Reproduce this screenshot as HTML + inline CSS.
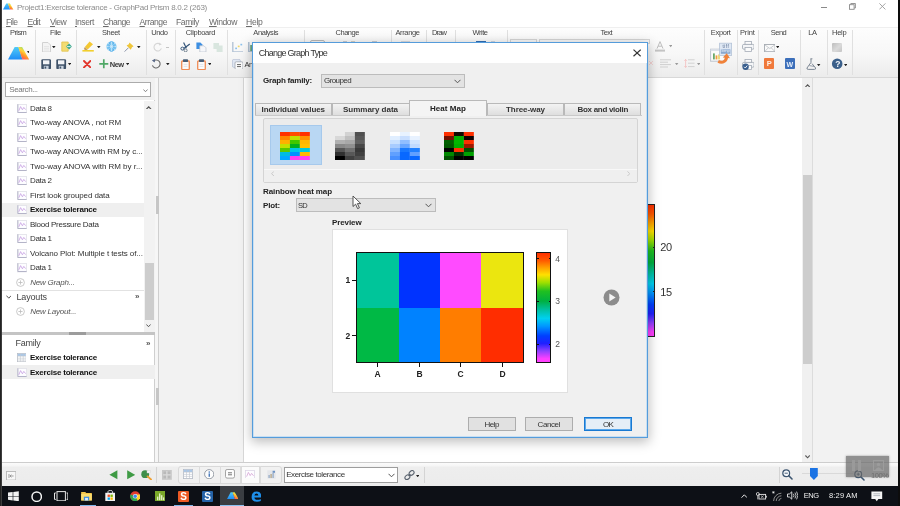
<!DOCTYPE html>
<html><head><meta charset="utf-8"><title>GraphPad Prism - Change Graph Type</title>
<style>
*{box-sizing:border-box;margin:0;padding:0}
html,body{width:900px;height:506px;overflow:hidden;background:#fff}
body{position:relative;font-family:"Liberation Sans",sans-serif;font-size:8px;color:#333}
.a{position:absolute}
.t{position:absolute;white-space:nowrap;line-height:1}
u{text-decoration-thickness:.5px;text-underline-offset:1px}
#w{position:absolute;left:0;top:0;width:900px;height:506px;filter:blur(.4px)}
</style></head><body>
<div id="w">
<div class="a" style="left:-8px;top:-8px;width:916px;height:23px;background:#fff"></div>
<div class="a" style="left:-8px;top:15px;width:916px;height:12px;background:#fff"></div>
<div class="a" style="left:-8px;top:27px;width:916px;height:51px;background:linear-gradient(#fdfdfd 0%,#f7f7f7 55%,#ececec 100%);border-bottom:1px solid #d8d8d8;border-top:1px solid #efefef"></div>
<div class="a" style="left:-8px;top:78px;width:916px;height:384.2px;background:#f2f2f2"></div>
<div class="a" style="left:2px;top:78px;width:153px;height:384.2px;background:#fff"></div>
<div class="a" style="left:154.4px;top:78px;width:4.6px;height:384.2px;background:#f6f6f6;border-left:1px solid #cfcfcf;border-right:1px solid #cfcfcf"></div>
<div class="a" style="left:243px;top:78px;width:559px;height:384.2px;background:#fff;border-left:1px solid #d6d6d6"></div>
<div class="a" style="left:802px;top:78px;width:11px;height:384.2px;background:#f0f0f0;border-right:1px solid #dcdcdc"></div>
<div class="a" style="left:803px;top:175px;width:9px;height:189px;background:#cdcdcd"></div>
<div class="a" style="left:-8px;top:462.2px;width:916px;height:24px;background:linear-gradient(#fbfbfb 0,#f6f6f6 3px,#eeeeee 4px,#ececec 100%);border-top:1px solid #cdcdcd"></div>
<div class="a" style="left:-8px;top:486px;width:916px;height:28px;background:#0d1016"></div>
<div class="t" style="left:17.0px;top:3.6px;font-size:8px;font-weight:400;color:#8c8c8c;letter-spacing:-0.260px;">Project1:Exercise tolerance - GraphPad Prism 8.0.2 (263)</div>
<div class="t" style="left:6.0px;top:18.3px;font-size:8.6px;font-weight:400;color:#6a6a6a;letter-spacing:-0.590px;"><u>F</u>ile</div>
<div class="t" style="left:27.5px;top:18.3px;font-size:8.6px;font-weight:400;color:#6a6a6a;letter-spacing:-0.578px;"><u>E</u>dit</div>
<div class="t" style="left:50.0px;top:18.3px;font-size:8.6px;font-weight:400;color:#6a6a6a;letter-spacing:-0.621px;"><u>V</u>iew</div>
<div class="t" style="left:75.0px;top:18.3px;font-size:8.6px;font-weight:400;color:#6a6a6a;letter-spacing:-0.417px;"><u>I</u>nsert</div>
<div class="t" style="left:103.0px;top:18.3px;font-size:8.6px;font-weight:400;color:#6a6a6a;letter-spacing:-0.521px;"><u>C</u>hange</div>
<div class="t" style="left:139.5px;top:18.3px;font-size:8.6px;font-weight:400;color:#6a6a6a;letter-spacing:-0.440px;"><u>A</u>rrange</div>
<div class="t" style="left:176.0px;top:18.3px;font-size:8.6px;font-weight:400;color:#6a6a6a;letter-spacing:-0.388px;">Fa<u>m</u>ily</div>
<div class="t" style="left:209.0px;top:18.3px;font-size:8.6px;font-weight:400;color:#6a6a6a;letter-spacing:-0.432px;"><u>W</u>indow</div>
<div class="t" style="left:246.0px;top:18.3px;font-size:8.6px;font-weight:400;color:#6a6a6a;letter-spacing:-0.297px;"><u>H</u>elp</div>
<div class="t" style="left:10.0px;top:29.0px;font-size:7.5px;font-weight:400;color:#444;letter-spacing:-0.574px;">Prism</div>
<div class="t" style="left:50.0px;top:29.0px;font-size:7.5px;font-weight:400;color:#444;letter-spacing:-0.323px;">File</div>
<div class="t" style="left:102.0px;top:29.0px;font-size:7.5px;font-weight:400;color:#444;letter-spacing:-0.382px;">Sheet</div>
<div class="t" style="left:151.3px;top:29.0px;font-size:7.5px;font-weight:400;color:#444;letter-spacing:-0.434px;">Undo</div>
<div class="t" style="left:185.8px;top:29.0px;font-size:7.5px;font-weight:400;color:#444;letter-spacing:-0.323px;">Clipboard</div>
<div class="t" style="left:253.3px;top:29.0px;font-size:7.5px;font-weight:400;color:#444;letter-spacing:-0.405px;">Analysis</div>
<div class="t" style="left:335.5px;top:29.0px;font-size:7.5px;font-weight:400;color:#444;letter-spacing:-0.464px;">Change</div>
<div class="t" style="left:395.5px;top:29.0px;font-size:7.5px;font-weight:400;color:#444;letter-spacing:-0.384px;">Arrange</div>
<div class="t" style="left:432.0px;top:29.0px;font-size:7.5px;font-weight:400;color:#444;letter-spacing:-0.879px;">Draw</div>
<div class="t" style="left:472.5px;top:29.0px;font-size:7.5px;font-weight:400;color:#444;letter-spacing:-0.475px;">Write</div>
<div class="t" style="left:600.5px;top:29.0px;font-size:7.5px;font-weight:400;color:#444;letter-spacing:-0.566px;">Text</div>
<div class="t" style="left:710.8px;top:29.0px;font-size:7.5px;font-weight:400;color:#444;letter-spacing:-0.331px;">Export</div>
<div class="t" style="left:740.0px;top:29.0px;font-size:7.5px;font-weight:400;color:#444;letter-spacing:-0.144px;">Print</div>
<div class="t" style="left:770.8px;top:29.0px;font-size:7.5px;font-weight:400;color:#444;letter-spacing:-0.508px;">Send</div>
<div class="t" style="left:808.3px;top:29.0px;font-size:7.5px;font-weight:400;color:#444;letter-spacing:-0.394px;">LA</div>
<div class="t" style="left:832.0px;top:29.0px;font-size:7.5px;font-weight:400;color:#444;letter-spacing:-0.284px;">Help</div>
<div class="a" style="left:35px;top:30px;width:1px;height:45px;background:#e0e0e0"></div>
<div class="a" style="left:76px;top:30px;width:1px;height:45px;background:#e0e0e0"></div>
<div class="a" style="left:146px;top:30px;width:1px;height:45px;background:#e0e0e0"></div>
<div class="a" style="left:175px;top:30px;width:1px;height:45px;background:#e0e0e0"></div>
<div class="a" style="left:227px;top:30px;width:1px;height:45px;background:#e0e0e0"></div>
<div class="a" style="left:304px;top:30px;width:1px;height:45px;background:#e0e0e0"></div>
<div class="a" style="left:391px;top:30px;width:1px;height:45px;background:#e0e0e0"></div>
<div class="a" style="left:426px;top:30px;width:1px;height:45px;background:#e0e0e0"></div>
<div class="a" style="left:455px;top:30px;width:1px;height:45px;background:#e0e0e0"></div>
<div class="a" style="left:507px;top:30px;width:1px;height:45px;background:#e0e0e0"></div>
<div class="a" style="left:704px;top:30px;width:1px;height:45px;background:#e0e0e0"></div>
<div class="a" style="left:737px;top:30px;width:1px;height:45px;background:#e0e0e0"></div>
<div class="a" style="left:758px;top:30px;width:1px;height:45px;background:#e0e0e0"></div>
<div class="a" style="left:800px;top:30px;width:1px;height:45px;background:#e0e0e0"></div>
<div class="a" style="left:827px;top:30px;width:1px;height:45px;background:#e0e0e0"></div>
<div class="a" style="left:852px;top:30px;width:1px;height:45px;background:#e0e0e0"></div>
<div class="a" style="left:2px;top:78px;width:153px;height:22px;background:#f1f1f1"></div>
<div class="a" style="left:5px;top:82px;width:146px;height:15px;background:#fff;border:1px solid #ababab"></div>
<div class="t" style="left:9.2px;top:86.4px;font-size:8px;font-weight:400;color:#777;letter-spacing:-0.391px;">Search...</div>
<div class="a" style="left:2px;top:203px;width:142px;height:14px;background:#efefef"></div>
<div class="t" style="left:30.0px;top:105.3px;font-size:8px;font-weight:400;color:#303030;letter-spacing:-0.330px;">Data 8</div>
<div class="t" style="left:30.0px;top:118.8px;font-size:8px;font-weight:400;color:#303030;letter-spacing:-0.081px;">Two-way ANOVA , not RM</div>
<div class="t" style="left:30.0px;top:134.3px;font-size:8px;font-weight:400;color:#303030;letter-spacing:-0.081px;">Two-way ANOVA , not RM</div>
<div class="t" style="left:30.0px;top:147.8px;font-size:8px;font-weight:400;color:#303030;letter-spacing:-0.086px;">Two-way ANOVA with RM by c...</div>
<div class="t" style="left:30.0px;top:163.3px;font-size:8px;font-weight:400;color:#303030;letter-spacing:-0.025px;">Two-way ANOVA with RM by r...</div>
<div class="t" style="left:30.0px;top:176.8px;font-size:8px;font-weight:400;color:#303030;letter-spacing:-0.330px;">Data 2</div>
<div class="t" style="left:30.0px;top:192.3px;font-size:8px;font-weight:400;color:#303030;letter-spacing:-0.097px;">First look grouped data</div>
<div class="t" style="left:30.0px;top:205.8px;font-size:8px;font-weight:700;color:#111;letter-spacing:-0.218px;">Exercise tolerance</div>
<div class="t" style="left:30.0px;top:221.4px;font-size:8px;font-weight:400;color:#303030;letter-spacing:-0.275px;">Blood Pressure Data</div>
<div class="t" style="left:30.0px;top:234.9px;font-size:8px;font-weight:400;color:#303030;letter-spacing:-0.330px;">Data 1</div>
<div class="t" style="left:30.0px;top:250.4px;font-size:8px;font-weight:400;color:#303030;letter-spacing:-0.078px;">Volcano Plot: Multiple t tests of...</div>
<div class="t" style="left:30.0px;top:263.9px;font-size:8px;font-weight:400;color:#303030;letter-spacing:-0.330px;">Data 1</div>
<div class="t" style="left:30.2px;top:278.6px;font-size:8px;font-weight:400;color:#555;font-style:italic;letter-spacing:-0.220px;">New Graph...</div>
<div class="t" style="left:16.4px;top:293.4px;font-size:9px;font-weight:400;color:#444;letter-spacing:-0.133px;">Layouts</div>
<div class="t" style="left:30.2px;top:308.4px;font-size:8px;font-weight:400;color:#555;font-style:italic;letter-spacing:-0.209px;">New Layout...</div>
<div class="t" style="left:135.0px;top:293.1px;font-size:8px;font-weight:700;color:#555;letter-spacing:1.200px;">»</div>
<div class="a" style="left:144px;top:101px;width:10.5px;height:231px;background:#f2f2f2"></div>
<div class="a" style="left:144.5px;top:263px;width:9.5px;height:57px;background:#cdcdcd"></div>
<div class="a" style="left:156px;top:196px;width:2.5px;height:17.5px;background:#c6c6c6"></div>
<div class="a" style="left:156px;top:388px;width:2.5px;height:16.5px;background:#c6c6c6"></div>
<div class="a" style="left:2px;top:331.8px;width:153px;height:3.4px;background:#c4c4c4"></div>
<div class="a" style="left:69px;top:331.8px;width:17px;height:3.4px;background:#9c9c9c"></div>
<div class="t" style="left:15.6px;top:339.4px;font-size:9px;font-weight:400;color:#444;letter-spacing:-0.267px;">Family</div>
<div class="t" style="left:146.0px;top:340.3px;font-size:8px;font-weight:700;color:#555;letter-spacing:1.200px;">»</div>
<div class="a" style="left:2px;top:365px;width:153px;height:14px;background:#efefef"></div>
<div class="t" style="left:29.9px;top:354.0px;font-size:8px;font-weight:700;color:#111;letter-spacing:-0.207px;">Exercise tolerance</div>
<div class="t" style="left:29.9px;top:369.2px;font-size:8px;font-weight:700;color:#111;letter-spacing:-0.207px;">Exercise tolerance</div>
<svg class="a" style="left:3.3px;top:3px;" width="10.4" height="7" viewBox="0 0 21 12.5"><defs><linearGradient id="pba" x1="0" y1="0" x2="0" y2="1"><stop offset="0" stop-color="#52ccf6"/><stop offset="1" stop-color="#1e8df6"/></linearGradient><linearGradient id="pra" gradientUnits="userSpaceOnUse" x1="13" y1="12.5" x2="19" y2="3"><stop offset="0" stop-color="#ff4f8f"/><stop offset=".22" stop-color="#ff6a4a"/><stop offset=".45" stop-color="#ff9a28"/><stop offset=".72" stop-color="#ffd83a"/><stop offset="1" stop-color="#9fe06a"/></linearGradient></defs><path d="M0 12.5 L6.6 0 L10.4 0 L14.4 12.5 Z" fill="url(#pba)"/><path d="M10.2 0 L14 0 L21 12.5 L14.2 12.5 Z" fill="url(#pra)"/></svg>
<svg class="a" style="left:8.2px;top:47px;" width="21.2" height="12.6" viewBox="0 0 21 12.5"><defs><linearGradient id="pbb" x1="0" y1="0" x2="0" y2="1"><stop offset="0" stop-color="#52ccf6"/><stop offset="1" stop-color="#1e8df6"/></linearGradient><linearGradient id="prb" gradientUnits="userSpaceOnUse" x1="13" y1="12.5" x2="19" y2="3"><stop offset="0" stop-color="#ff4f8f"/><stop offset=".22" stop-color="#ff6a4a"/><stop offset=".45" stop-color="#ff9a28"/><stop offset=".72" stop-color="#ffd83a"/><stop offset="1" stop-color="#9fe06a"/></linearGradient></defs><path d="M0 12.5 L6.6 0 L10.4 0 L14.4 12.5 Z" fill="url(#pbb)"/><path d="M10.2 0 L14 0 L21 12.5 L14.2 12.5 Z" fill="url(#prb)"/></svg>
<svg class="a" style="left:26.6px;top:50.8px;" width="2.8" height="2.4" viewBox="0 0 2.8 2.4"><path d="M0 0 L2.8 0 L1.4 2.3 Z" fill="#222"/></svg>
<svg class="a" style="left:41.5px;top:41.5px;" width="9" height="10.5" viewBox="0 0 9 10.5"><path d="M0.5 0.5 H6 L8.5 3 V10 H0.5 Z" fill="#f4f4f4" stroke="#d2d2d2" stroke-width="1"/><path d="M2 4.5 H7 M2 6.3 H7 M2 8 H7" stroke="#e0e0e0" stroke-width=".7"/></svg>
<svg class="a" style="left:52px;top:46.099999999999994px;" width="3.6" height="2.4" viewBox="0 0 3.6 2.4"><path d="M0 0 L3.6 0 L1.8 2.3 Z" fill="#222"/></svg>
<svg class="a" style="left:61px;top:41px;" width="11" height="11" viewBox="0 0 11 11"><path d="M0.8 1 H7.2 V10.2 H0.8 Z" fill="#f3dc72" stroke="#e2c24a" stroke-width=".8"/><path d="M5 5.6 L8.2 2.6 L10.8 5.6 L8.2 8.6 Z" fill="#3aa78c"/><path d="M5.8 5.6 H9.6" stroke="#d8f2e8" stroke-width="1"/></svg>
<svg class="a" style="left:41px;top:58.8px;" width="10.4" height="10.4" viewBox="0 0 10.4 10.4"><rect x=".3" y=".3" width="9.8" height="9.8" rx="1.2" fill="#3f5269"/><rect x="2" y="1.3" width="6.4" height="4" fill="#f2f4f7"/><rect x="2.8" y="6.8" width="4.8" height="3.3" fill="#c8d2de"/><rect x="3.6" y="7.6" width="1.6" height="2" fill="#3f5269"/></svg>
<svg class="a" style="left:56.4px;top:58.8px;" width="10.4" height="10.4" viewBox="0 0 10.4 10.4"><rect x=".3" y=".3" width="9.8" height="9.8" rx="1.2" fill="#3f5269"/><rect x="2" y="1.3" width="6.4" height="4" fill="#f2f4f7"/><rect x="2.8" y="6.8" width="4.8" height="3.3" fill="#c8d2de"/><rect x="3.6" y="7.6" width="1.6" height="2" fill="#3f5269"/></svg>
<svg class="a" style="left:67.8px;top:63.39999999999999px;" width="3.2" height="2.4" viewBox="0 0 3.2 2.4"><path d="M0 0 L3.2 0 L1.6 2.3 Z" fill="#222"/></svg>
<svg class="a" style="left:81.5px;top:41px;" width="12" height="11" viewBox="0 0 12 11"><path d="M7.6 0.6 L11 3.2 L5.6 8.4 L2.8 6 Z" fill="#f4c832"/><path d="M2.8 6 L5.6 8.4 L3.6 9.4 L1.8 8 Z" fill="#c9a060"/><path d="M0.4 9.8 H11.8" stroke="#f2cf2e" stroke-width="1.6"/></svg>
<svg class="a" style="left:97.3px;top:45.599999999999994px;" width="3.6" height="2.4" viewBox="0 0 3.6 2.4"><path d="M0 0 L3.6 0 L1.8 2.3 Z" fill="#222"/></svg>
<svg class="a" style="left:106px;top:41px;" width="11" height="11" viewBox="0 0 11 11"><circle cx="5.5" cy="5.5" r="5.1" fill="#7cc6f2"/><path d="M5.5 .4 V10.6 M.4 5.5 H10.6 M1.8 2 L9.2 9 M9.2 2 L1.8 9" stroke="#d4ecfb" stroke-width=".7" fill="none"/><ellipse cx="5.5" cy="5.5" rx="2.4" ry="5.1" fill="none" stroke="#4aa6e6" stroke-width=".6"/></svg>
<svg class="a" style="left:123.5px;top:41.5px;" width="10" height="10" viewBox="0 0 10 10"><path d="M5.4 0.4 L9.6 4.2 L8 5.2 L6.8 7.8 L2.6 3.6 L4.8 2.2 Z" fill="#efc63a"/><path d="M4.4 5.8 L0.6 9.6" stroke="#8a93a8" stroke-width="1"/></svg>
<svg class="a" style="left:137.3px;top:45.599999999999994px;" width="3.6" height="2.4" viewBox="0 0 3.6 2.4"><path d="M0 0 L3.6 0 L1.8 2.3 Z" fill="#222"/></svg>
<svg class="a" style="left:83px;top:59.5px;" width="8.4" height="8.4" viewBox="0 0 8.4 8.4"><path d="M1 1 L7.4 7.4 M7.4 1 L1 7.4" stroke="#e2352b" stroke-width="1.9" stroke-linecap="round"/></svg>
<svg class="a" style="left:99px;top:59px;" width="9.6" height="9.6" viewBox="0 0 9.6 9.6"><path d="M4.8 .3 V9.3 M.3 4.8 H9.3" stroke="#4fa866" stroke-width="1.7"/></svg>
<div class="t" style="left:109.8px;top:60.6px;font-size:7.5px;font-weight:700;color:#3a3a3a;letter-spacing:-0.541px;">New</div>
<svg class="a" style="left:125.8px;top:63.39999999999999px;" width="3.2" height="2.4" viewBox="0 0 3.2 2.4"><path d="M0 0 L3.2 0 L1.6 2.3 Z" fill="#222"/></svg>
<svg class="a" style="left:152.5px;top:41.8px;" width="9.4" height="9.8" viewBox="0 0 9.4 9.8"><path d="M7.6 2.6 A3.8 3.8 0 1 0 8.4 6.4" fill="none" stroke="#d6d6d6" stroke-width="1.1"/><path d="M6 .6 L8.8 2.6 L6 3.6 Z" fill="#d6d6d6"/></svg>
<div class="a" style="left:166px;top:46.5px;width:3px;height:1px;background:#c4c4c4"></div>
<svg class="a" style="left:151.3px;top:58.4px;" width="9.8" height="10.8" viewBox="0 0 9.8 10.8"><path d="M2.2 3.2 A4 4 0 1 1 1.4 7.4" fill="none" stroke="#6a6a6a" stroke-width="1.1"/><path d="M4.2 .8 L.9 2.6 L3.8 4.6 Z" fill="#5a6a8a"/></svg>
<svg class="a" style="left:166.2px;top:62.8px;" width="3.6" height="2.4" viewBox="0 0 3.6 2.4"><path d="M0 0 L3.6 0 L1.8 2.3 Z" fill="#222"/></svg>
<svg class="a" style="left:180px;top:41.8px;" width="11" height="10.4" viewBox="0 0 11 10.4"><path d="M3.6 .6 L6.4 6.2 M9.8 2 L3.8 6.6" stroke="#34557a" stroke-width="1.2" fill="none"/><circle cx="2.4" cy="6.6" r="1.5" fill="none" stroke="#34557a" stroke-width="1"/><circle cx="5.6" cy="8.4" r="1.5" fill="none" stroke="#6a7a8a" stroke-width="1"/></svg>
<svg class="a" style="left:196.2px;top:41.8px;" width="10.6" height="10.4" viewBox="0 0 10.6 10.4"><path d="M.4 .4 H4.4 L6.4 2.4 V7 H.4 Z" fill="#3d8fe2"/><path d="M3.8 3.8 H8 L10 5.8 V10 H3.8 Z" fill="#f6f7fa" stroke="#b9c0cc" stroke-width=".7"/></svg>
<svg class="a" style="left:212.5px;top:41.8px;" width="10" height="10.4" viewBox="0 0 10 10.4"><path d="M.4 1 H6 V7 H.4 Z M3.6 3.6 H9.6 V10 H3.6 Z" fill="#d9e6df"/></svg>
<svg class="a" style="left:180.6px;top:58.5px;" width="9" height="11.2" viewBox="0 0 9 11.2"><rect x=".7" y="2" width="7.6" height="8.6" rx=".8" fill="#fbfbfb" stroke="#f08c55" stroke-width="1.3"/><rect x="2" y=".3" width="5" height="2.6" rx=".6" fill="#475d75"/><path d="M2.6 5.4 H6.4 M2.6 7.4 H6.4" stroke="#d8dde4" stroke-width=".7"/></svg>
<svg class="a" style="left:196.8px;top:58.5px;" width="9" height="11.2" viewBox="0 0 9 11.2"><rect x=".7" y="2" width="7.6" height="8.6" rx=".8" fill="#fbfbfb" stroke="#f08c55" stroke-width="1.3"/><rect x="2" y=".3" width="5" height="2.6" rx=".6" fill="#475d75"/><path d="M2.6 5.4 H6.4 M2.6 7.4 H6.4" stroke="#d8dde4" stroke-width=".7"/></svg>
<svg class="a" style="left:207.7px;top:63.099999999999994px;" width="3.6" height="2.4" viewBox="0 0 3.6 2.4"><path d="M0 0 L3.6 0 L1.8 2.3 Z" fill="#222"/></svg>
<svg class="a" style="left:232px;top:41.5px;" width="11.4" height="10.6" viewBox="0 0 11.4 10.6"><path d="M.8 0 V10 H11.4" stroke="#b4c4d6" stroke-width="1.4" fill="none"/><rect x="3.2" y="5.6" width="1.8" height="1.6" fill="#8cc0ec"/><rect x="5.8" y="3.6" width="1.8" height="1.6" fill="#f0d868"/><rect x="8.4" y="1.8" width="1.8" height="1.6" fill="#8cc0ec"/></svg>
<svg class="a" style="left:248px;top:41.5px;" width="4" height="10.6" viewBox="0 0 4 10.6"><path d="M.8 0 V10 H4" stroke="#a8bace" stroke-width="1.4" fill="none"/><rect x="2.2" y="3" width="1.8" height="6" fill="#6aa884"/></svg>
<svg class="a" style="left:232px;top:58.5px;" width="11.4" height="10.8" viewBox="0 0 11.4 10.8"><rect x=".4" y=".4" width="8" height="8" rx="1.4" fill="#dfe6f2" stroke="#b4bed2" stroke-width=".7"/><rect x="3" y="2.8" width="8" height="7.6" rx="1.2" fill="#fcfcfc" stroke="#9ea4ae" stroke-width=".8"/><path d="M5 5.6 H9 M5 7.6 H9" stroke="#555" stroke-width=".9"/></svg>
<div class="t" style="left:244.6px;top:60.6px;font-size:7.5px;font-weight:400;color:#333;letter-spacing:-0.644px;">An</div>
<div class="a" style="left:309.5px;top:39.5px;width:15.5px;height:5px;border:1px solid #b9b9b9;border-radius:2px;background:#f6f6f6"></div>
<div class="a" style="left:476px;top:40.5px;width:10px;height:2.5px;background:#2f6fb8"></div>
<div class="a" style="left:343px;top:41px;width:4px;height:1.6px;background:#c9ccd2"></div>
<div class="a" style="left:351px;top:41px;width:4px;height:1.6px;background:#d6d0c4"></div>
<div class="a" style="left:372px;top:41px;width:5px;height:1.6px;background:#c9ccd2"></div>
<div class="a" style="left:401px;top:41.2px;width:9px;height:1.4px;background:#d9dbe0"></div>
<div class="a" style="left:491px;top:41px;width:4px;height:2px;background:#cfd6e0"></div>
<div class="a" style="left:510px;top:39px;width:26.5px;height:5px;border:1px solid #d6d6d6;background:#f8f8f8"></div>
<div class="a" style="left:539px;top:39px;width:111px;height:5px;border:1px solid #d6d6d6;background:#f8f8f8"></div>
<svg class="a" style="left:653.5px;top:41px;" width="12" height="11" viewBox="0 0 12 11"><path d="M3 7.6 L6 .6 L9 7.6 M4.2 5.2 H7.8" stroke="#bdbdbd" stroke-width="1" fill="none"/><rect x="1" y="8.6" width="10" height="2" fill="#c4c4c4"/></svg>
<svg class="a" style="left:668.9px;top:45.4px;" width="3.4" height="2.4" viewBox="0 0 3.4 2.4"><path d="M0 0 L3.4 0 L1.7 2.3 Z" fill="#9a9a9a"/></svg>
<svg class="a" style="left:648px;top:59px;" width="6" height="8" viewBox="0 0 6 8"><path d="M1 2 L5 6 M5 2 L1 6" stroke="#f3d3d3" stroke-width="1"/></svg>
<svg class="a" style="left:660px;top:59px;" width="12" height="9" viewBox="0 0 12 9"><path d="M0 .8 H11 M0 3.2 H8 M0 5.6 H11 M0 8 H8" stroke="#cfcfcf" stroke-width="1"/></svg>
<svg class="a" style="left:675.4px;top:62.8px;" width="3.4" height="2.4" viewBox="0 0 3.4 2.4"><path d="M0 0 L3.4 0 L1.7 2.3 Z" fill="#9a9a9a"/></svg>
<svg class="a" style="left:683.5px;top:59px;" width="11" height="9" viewBox="0 0 11 9"><path d="M4 .8 H10.6 M4 4.2 H10.6 M4 7.6 H10.6" stroke="#d2d2d2" stroke-width="1"/><path d="M1.6 .4 V8.4 M.4 1.8 L1.6 .4 L2.8 1.8 M.4 7 L1.6 8.4 L2.8 7" stroke="#f2bcbc" stroke-width=".8" fill="none"/></svg>
<svg class="a" style="left:696.6px;top:62.8px;" width="3.4" height="2.4" viewBox="0 0 3.4 2.4"><path d="M0 0 L3.4 0 L1.7 2.3 Z" fill="#9a9a9a"/></svg>
<svg class="a" style="left:710px;top:41.5px;" width="22" height="22" viewBox="0 0 22 22"><rect x=".6" y="7.2" width="14.4" height="12" fill="#fbfbfb" stroke="#bcc3cd" stroke-width="1"/><rect x=".6" y="7.2" width="14.4" height="1.8" fill="#dde2ea"/><rect x="3" y="11.4" width="1.8" height="6" fill="#6aa86a"/><rect x="5.6" y="13.4" width="1.8" height="4" fill="#f0a040"/><rect x="8.2" y="12.4" width="1.6" height="5" fill="#e8d060"/><rect x="9.6" y="1.2" width="12" height="12.2" fill="#dfe8f4" stroke="#b4c3d8" stroke-width=".8"/><rect x="10.8" y="7.4" width="9.6" height="4.4" fill="#8aa8cf"/><path d="M8.2 19.4 C12.6 21.6 16.6 19 16.6 14.8" stroke="#f0823a" stroke-width="3" fill="none"/><path d="M12.8 15.6 L16.8 11.2 L20 16.2 Z" fill="#f0823a"/></svg>
<div class="t" style="left:722.4px;top:44.7px;font-size:4.6px;font-weight:400;color:#5a6f92;letter-spacing:0.555px;">tiff</div>
<div class="t" style="left:721.6px;top:48.8px;font-size:4.4px;font-weight:400;color:#e8eef6;letter-spacing:-0.116px;">bmp</div>
<svg class="a" style="left:741.7px;top:40.7px;" width="12.6" height="11.2" viewBox="0 0 12.6 11.2"><rect x="3" y=".5" width="6.6" height="3.4" fill="#fbfbfb" stroke="#a4abb6" stroke-width=".8"/><rect x=".5" y="3.4" width="11.6" height="4.8" rx="1.3" fill="#f4f5f7" stroke="#a4abb6" stroke-width=".9"/><rect x="3" y="6.6" width="6.6" height="3.8" fill="#fbfbfb" stroke="#a4abb6" stroke-width=".8"/></svg>
<svg class="a" style="left:741.7px;top:58.5px;" width="12.6" height="11.2" viewBox="0 0 12.6 11.2"><rect x="3" y=".5" width="6.6" height="3.4" fill="#fbfbfb" stroke="#a4abb6" stroke-width=".8"/><rect x=".5" y="3.4" width="11.6" height="4.8" rx="1.3" fill="#f4f5f7" stroke="#a4abb6" stroke-width=".9"/><rect x="3" y="6.6" width="6.6" height="3.8" fill="#fbfbfb" stroke="#a4abb6" stroke-width=".8"/><circle cx="3.6" cy="7.8" r="3.2" fill="#3a5f8e"/><path d="M2.1 7.8 L3.3 9 L5.2 6.6" stroke="#fff" stroke-width=".9" fill="none"/></svg>
<svg class="a" style="left:763.8px;top:43.8px;" width="11.6" height="8.2" viewBox="0 0 11.6 8.2"><rect x=".5" y=".5" width="10.6" height="7.2" fill="#fafafa" stroke="#a4a9b0" stroke-width=".9"/><path d="M.6 .7 L5.8 4.6 L11 .7 M.6 7.6 L4.4 3.8 M11 7.6 L7.2 3.8" stroke="#b4b8be" stroke-width=".7" fill="none"/></svg>
<svg class="a" style="left:775.6px;top:46.0px;" width="3.4" height="2.4" viewBox="0 0 3.4 2.4"><path d="M0 0 L3.4 0 L1.7 2.3 Z" fill="#222"/></svg>
<div class="a" style="left:764px;top:58.3px;width:10.2px;height:10.8px;background:#f0793b;border-radius:1px"></div>
<div class="t" style="left:766.8px;top:60.3px;font-size:7.5px;font-weight:700;color:#fff2e6;letter-spacing:-0.216px;">P</div>
<div class="a" style="left:784.8px;top:58.3px;width:10.4px;height:10.8px;background:#3c6fba;border-radius:1px"></div>
<div class="t" style="left:786.4px;top:60.6px;font-size:7px;font-weight:700;color:#eaf1fb;letter-spacing:0.591px;">W</div>
<svg class="a" style="left:805.5px;top:57.8px;" width="10.6" height="12.4" viewBox="0 0 10.6 12.4"><path d="M4.4 .8 H6.4 M5 1 V4.4 L1 10 Q.6 11.4 2.2 11.4 H8.4 Q10 11.4 9.6 10 L6 5.6" stroke="#7c8794" stroke-width="1" fill="none"/><path d="M3.4 7.6 L8 8.4" stroke="#7c8794" stroke-width=".8"/></svg>
<svg class="a" style="left:817.4px;top:63.5px;" width="3.4" height="2.4" viewBox="0 0 3.4 2.4"><path d="M0 0 L3.4 0 L1.7 2.3 Z" fill="#222"/></svg>
<div class="a" style="left:832px;top:42.5px;width:9.8px;height:9.4px;background:linear-gradient(135deg,#bdbdbd,#dadada 55%,#c4c4c4);border-radius:1px"></div>
<svg class="a" style="left:831.2px;top:58.2px;" width="11.6" height="11.6" viewBox="0 0 11.6 11.6"><circle cx="6.2" cy="5.7" r="5.3" fill="#3a5f8a"/></svg>
<div class="t" style="left:835.3px;top:59.8px;font-size:8.5px;font-weight:700;color:#f2f6fb;letter-spacing:-0.900px;">?</div>
<svg class="a" style="left:843.6px;top:63.5px;" width="3.4" height="2.4" viewBox="0 0 3.4 2.4"><path d="M0 0 L3.4 0 L1.7 2.3 Z" fill="#222"/></svg>
<div class="a" style="left:821px;top:7px;width:5.5px;height:1px;background:#8a8a8a"></div>
<svg class="a" style="left:848.5px;top:3.2px;" width="7" height="7" viewBox="0 0 7 7"><rect x=".5" y="1.7" width="4.6" height="4.6" fill="none" stroke="#8a8a8a" stroke-width=".9"/><path d="M1.8 1.6 V.5 H6.4 V5 H5.2" fill="none" stroke="#8a8a8a" stroke-width=".9"/></svg>
<svg class="a" style="left:879px;top:3.4px;" width="7" height="7" viewBox="0 0 7 7"><path d="M.4 .4 L6.4 6.4 M6.4 .4 L.4 6.4" stroke="#9a9a9a" stroke-width=".9"/></svg>
<div class="a" style="left:647px;top:204px;width:8.3px;height:133px;background:linear-gradient(#ff3000 0%,#ff5a00 7%,#ff9c00 13%,#ffe000 20%,#a0e000 27%,#20c020 35%,#00b040 44%,#00c0a0 52%,#00d0f0 60%,#0098ff 67%,#0040ff 76%,#2020ff 83%,#9040ff 90%,#ff40ff 97%);border:1px solid #222;border-left:0"></div>
<div class="t" style="left:660.3px;top:241.6px;font-size:11px;font-weight:400;color:#333;letter-spacing:-0.375px;">20</div>
<div class="t" style="left:660.3px;top:287.2px;font-size:11px;font-weight:400;color:#333;letter-spacing:-0.375px;">15</div>
<div class="a" style="left:653px;top:246.5px;width:2px;height:1px;background:#222"></div>
<div class="a" style="left:653px;top:291px;width:2px;height:1px;background:#222"></div>
<div class="a" style="left:251.7px;top:41.7px;width:396.6px;height:396.8px;background:#f0f0f0;border:1.4px solid #559cdb;box-shadow:0 3px 11px 1px rgba(0,0,0,.26), inset 0 0 0 .7px #b9d9f3"></div>
<div class="a" style="left:253.3px;top:43.3px;width:393.4px;height:19.5px;background:#fff"></div>
<div class="t" style="left:258.7px;top:48.6px;font-size:9px;font-weight:400;color:#333;letter-spacing:-0.741px;">Change Graph Type</div>
<svg class="a" style="left:633px;top:48.6px;" width="8.2" height="8" viewBox="0 0 8.2 8"><path d="M.5 .6 L7.7 7.2 M7.7 .6 L.5 7.2" stroke="#333" stroke-width="1.2" fill="none"/></svg>
<div class="t" style="left:263.0px;top:77.1px;font-size:8px;font-weight:700;color:#222;letter-spacing:-0.198px;">Graph family:</div>
<div class="a" style="left:321px;top:74px;width:144px;height:14px;background:#e3e3e3;border:1px solid #bcbcbc"></div>
<div class="t" style="left:324.0px;top:77.1px;font-size:8px;font-weight:400;color:#333;letter-spacing:-0.592px;">Grouped</div>
<svg class="a" style="left:454px;top:78.5px;" width="7" height="5" viewBox="0 0 7 5"><path d="M0.5 0.8 L3.5 3.8 L6.5 0.8" stroke="#555" stroke-width="1" fill="none"/></svg>
<div class="a" style="left:254.5px;top:102.7px;width:77.5px;height:12.5px;background:linear-gradient(#f3f3f3,#dedede);border:1px solid #b9b9b9;border-bottom:0"></div>
<div class="t" style="left:261.5px;top:105.9px;font-size:8px;font-weight:700;color:#333;letter-spacing:-0.057px;">Individual values</div>
<div class="a" style="left:332px;top:102.7px;width:77.5px;height:12.5px;background:linear-gradient(#f3f3f3,#dedede);border:1px solid #b9b9b9;border-bottom:0"></div>
<div class="t" style="left:343.0px;top:105.9px;font-size:8px;font-weight:700;color:#333;letter-spacing:-0.012px;">Summary data</div>
<div class="a" style="left:487px;top:102.7px;width:77px;height:12.5px;background:linear-gradient(#f3f3f3,#dedede);border:1px solid #b9b9b9;border-bottom:0"></div>
<div class="t" style="left:506.0px;top:105.9px;font-size:8px;font-weight:700;color:#333;letter-spacing:-0.064px;">Three-way</div>
<div class="a" style="left:564px;top:102.7px;width:77px;height:12.5px;background:linear-gradient(#f3f3f3,#dedede);border:1px solid #b9b9b9;border-bottom:0"></div>
<div class="t" style="left:577.5px;top:105.9px;font-size:8px;font-weight:700;color:#333;letter-spacing:-0.298px;">Box and violin</div>
<div class="a" style="left:254.5px;top:115.2px;width:387px;height:1px;background:#c9c9c9"></div>
<div class="a" style="left:409.3px;top:100.4px;width:77.5px;height:15.8px;background:#f4f4f4;border:1px solid #b9b9b9;border-bottom:0"></div>
<div class="t" style="left:430.0px;top:105.1px;font-size:8px;font-weight:700;color:#222;letter-spacing:0.055px;">Heat Map</div>
<div class="a" style="left:262.5px;top:118.3px;width:375px;height:64.5px;background:#ececec;border:1px solid #d4d4d4;border-radius:2px"></div>
<div class="a" style="left:270px;top:125px;width:51.5px;height:40px;background:#b9d7f3;border:1px solid #a6c9ec"></div>
<div class="t" style="left:263.0px;top:187.6px;font-size:8px;font-weight:700;color:#222;letter-spacing:-0.105px;">Rainbow heat map</div>
<div class="t" style="left:263.0px;top:202.4px;font-size:8px;font-weight:700;color:#222;letter-spacing:-0.156px;">Plot:</div>
<div class="a" style="left:295.5px;top:198px;width:140px;height:14px;background:#e3e3e3;border:1px solid #bcbcbc"></div>
<div class="t" style="left:298.0px;top:201.5px;font-size:7.5px;font-weight:400;color:#333;letter-spacing:-0.711px;">SD</div>
<svg class="a" style="left:425px;top:203px;" width="7" height="5" viewBox="0 0 7 5"><path d="M0.5 0.8 L3.5 3.8 L6.5 0.8" stroke="#555" stroke-width="1" fill="none"/></svg>
<div class="t" style="left:332.0px;top:218.7px;font-size:8px;font-weight:700;color:#222;letter-spacing:-0.107px;">Preview</div>
<div class="a" style="left:332px;top:228.8px;width:236px;height:164px;background:#fff;border:1px solid #e0e0e0"></div>
<div class="a" style="left:356px;top:252px;width:42.69999999999999px;height:55.5px;background:#00c59a"></div>
<div class="a" style="left:356px;top:307.5px;width:42.69999999999999px;height:55.0px;background:#00b945"></div>
<div class="a" style="left:398.7px;top:252px;width:41.30000000000001px;height:55.5px;background:#0033ff"></div>
<div class="a" style="left:398.7px;top:307.5px;width:41.30000000000001px;height:55.0px;background:#0082ff"></div>
<div class="a" style="left:440px;top:252px;width:41.30000000000001px;height:55.5px;background:#ff4bff"></div>
<div class="a" style="left:440px;top:307.5px;width:41.30000000000001px;height:55.0px;background:#ff7d00"></div>
<div class="a" style="left:481.3px;top:252px;width:42.19999999999999px;height:55.5px;background:#ebe60f"></div>
<div class="a" style="left:481.3px;top:307.5px;width:42.19999999999999px;height:55.0px;background:#ff2d00"></div>
<div class="a" style="left:355.5px;top:251.5px;width:168.5px;height:111.5px;border:1px solid #111"></div>
<div class="a" style="left:376.85px;top:363px;width:1px;height:4px;background:#111"></div>
<div class="t" style="left:374.4px;top:369.6px;font-size:8.5px;font-weight:700;color:#222;letter-spacing:-0.141px;">A</div>
<div class="a" style="left:418.85px;top:363px;width:1px;height:4px;background:#111"></div>
<div class="t" style="left:416.4px;top:369.6px;font-size:8.5px;font-weight:700;color:#222;letter-spacing:-0.141px;">B</div>
<div class="a" style="left:460.15px;top:363px;width:1px;height:4px;background:#111"></div>
<div class="t" style="left:457.6px;top:369.6px;font-size:8.5px;font-weight:700;color:#222;letter-spacing:-0.141px;">C</div>
<div class="a" style="left:501.9px;top:363px;width:1px;height:4px;background:#111"></div>
<div class="t" style="left:499.4px;top:369.6px;font-size:8.5px;font-weight:700;color:#222;letter-spacing:-0.141px;">D</div>
<div class="t" style="left:345.5px;top:275.8px;font-size:8.5px;font-weight:700;color:#222;letter-spacing:0.266px;">1</div>
<div class="a" style="left:351.5px;top:279.5px;width:4px;height:1px;background:#111"></div>
<div class="t" style="left:345.5px;top:332.3px;font-size:8.5px;font-weight:700;color:#222;letter-spacing:0.266px;">2</div>
<div class="a" style="left:351.5px;top:335px;width:4px;height:1px;background:#111"></div>
<div class="a" style="left:536.3px;top:251.8px;width:15px;height:111px;background:linear-gradient(#ff3000 0%,#ff5a00 7%,#ff9c00 13%,#ffe000 20%,#a0e000 27%,#20c020 35%,#00b040 44%,#00c0a0 52%,#00d0f0 60%,#0098ff 67%,#0040ff 76%,#2020ff 83%,#9040ff 90%,#ff40ff 97%);border:1px solid #111"></div>
<div class="t" style="left:555.2px;top:255.4px;font-size:8.5px;font-weight:400;color:#555;letter-spacing:0.266px;">4</div>
<div class="a" style="left:537px;top:258.1px;width:2px;height:1px;background:#111"></div>
<div class="a" style="left:548.5px;top:258.1px;width:2px;height:1px;background:#111"></div>
<div class="t" style="left:555.2px;top:297.1px;font-size:8.5px;font-weight:400;color:#555;letter-spacing:0.266px;">3</div>
<div class="a" style="left:537px;top:300.8px;width:2px;height:1px;background:#111"></div>
<div class="a" style="left:548.5px;top:300.8px;width:2px;height:1px;background:#111"></div>
<div class="t" style="left:555.2px;top:340.1px;font-size:8.5px;font-weight:400;color:#555;letter-spacing:0.266px;">2</div>
<div class="a" style="left:537px;top:343.8px;width:2px;height:1px;background:#111"></div>
<div class="a" style="left:548.5px;top:343.8px;width:2px;height:1px;background:#111"></div>
<svg class="a" style="left:602.5px;top:288.5px;" width="17" height="17" viewBox="0 0 17 17"><circle cx="8.5" cy="8.5" r="8" fill="#8c8c8c"/><path d="M6.3 4.6 L12.6 8.5 L6.3 12.4 Z" fill="#f4f4f4"/></svg>
<div class="a" style="left:467.5px;top:417px;width:48.5px;height:14px;background:#e1e1e1;border:1px solid #adadad"></div>
<div class="t" style="left:484.5px;top:421.4px;font-size:8px;font-weight:400;color:#333;letter-spacing:-0.488px;">Help</div>
<div class="a" style="left:524.5px;top:417px;width:48.5px;height:14px;background:#e1e1e1;border:1px solid #adadad"></div>
<div class="t" style="left:537.5px;top:421.4px;font-size:8px;font-weight:400;color:#333;letter-spacing:-0.401px;">Cancel</div>
<div class="a" style="left:584px;top:417px;width:48px;height:14px;background:#e5eef7;border:1px solid #1979d2;box-shadow:inset 0 0 0 1px #5aa7ea"></div>
<div class="t" style="left:603.0px;top:421.4px;font-size:8px;font-weight:400;color:#333;letter-spacing:-0.781px;">OK</div>
<svg class="a" style="left:352px;top:194.5px;" width="10" height="15" viewBox="0 0 10 15"><path d="M1 1 L1 11.5 L3.6 9.2 L5.6 13.6 L7.4 12.8 L5.4 8.6 L8.8 8.6 Z" fill="#fff" stroke="#444" stroke-width="0.9" stroke-linejoin="round"/></svg>
<svg class="a" style="left:280.4px;top:132px;" width="29.8" height="28" viewBox="0 0 29.8 28"><rect x="0.00" y="0.00" width="9.98" height="4.05" fill="#ff3000"/><rect x="0.00" y="4.00" width="9.98" height="4.05" fill="#ff8400"/><rect x="0.00" y="8.00" width="9.98" height="4.05" fill="#ffb000"/><rect x="0.00" y="12.00" width="9.98" height="4.05" fill="#c4e000"/><rect x="0.00" y="16.00" width="9.98" height="4.05" fill="#5cc800"/><rect x="0.00" y="20.00" width="9.98" height="4.05" fill="#00bce0"/><rect x="0.00" y="24.00" width="9.98" height="4.05" fill="#00a8ff"/><rect x="9.93" y="0.00" width="9.98" height="4.05" fill="#ff4c00"/><rect x="9.93" y="4.00" width="9.98" height="4.05" fill="#c0e000"/><rect x="9.93" y="8.00" width="9.98" height="4.05" fill="#40c800"/><rect x="9.93" y="12.00" width="9.98" height="4.05" fill="#00b020"/><rect x="9.93" y="16.00" width="9.98" height="4.05" fill="#00c8e8"/><rect x="9.93" y="20.00" width="9.98" height="4.05" fill="#0090ff"/><rect x="9.93" y="24.00" width="9.98" height="4.05" fill="#ff40f0"/><rect x="19.87" y="0.00" width="9.98" height="4.05" fill="#ff3000"/><rect x="19.87" y="4.00" width="9.98" height="4.05" fill="#ff9000"/><rect x="19.87" y="8.00" width="9.98" height="4.05" fill="#ffb800"/><rect x="19.87" y="12.00" width="9.98" height="4.05" fill="#ffc000"/><rect x="19.87" y="16.00" width="9.98" height="4.05" fill="#00c8d8"/><rect x="19.87" y="20.00" width="9.98" height="4.05" fill="#ffb800"/><rect x="19.87" y="24.00" width="9.98" height="4.05" fill="#ff40f0"/></svg>
<svg class="a" style="left:335px;top:132px;" width="29.8" height="28" viewBox="0 0 29.8 28"><rect x="0.00" y="4.00" width="9.98" height="4.05" fill="#d8d8d8"/><rect x="0.00" y="8.00" width="9.98" height="4.05" fill="#b0b0b0"/><rect x="0.00" y="12.00" width="9.98" height="4.05" fill="#888"/><rect x="0.00" y="16.00" width="9.98" height="4.05" fill="#555"/><rect x="0.00" y="20.00" width="9.98" height="4.05" fill="#303030"/><rect x="0.00" y="24.00" width="9.98" height="4.05" fill="#000"/><rect x="9.93" y="0.00" width="9.98" height="4.05" fill="#d2d2d2"/><rect x="9.93" y="4.00" width="9.98" height="4.05" fill="#c0c0c0"/><rect x="9.93" y="8.00" width="9.98" height="4.05" fill="#a8a8a8"/><rect x="9.93" y="12.00" width="9.98" height="4.05" fill="#909090"/><rect x="9.93" y="16.00" width="9.98" height="4.05" fill="#707070"/><rect x="9.93" y="20.00" width="9.98" height="4.05" fill="#585858"/><rect x="9.93" y="24.00" width="9.98" height="4.05" fill="#404040"/><rect x="19.87" y="0.00" width="9.98" height="4.05" fill="#505050"/><rect x="19.87" y="4.00" width="9.98" height="4.05" fill="#585858"/><rect x="19.87" y="8.00" width="9.98" height="4.05" fill="#606060"/><rect x="19.87" y="12.00" width="9.98" height="4.05" fill="#484848"/><rect x="19.87" y="16.00" width="9.98" height="4.05" fill="#383838"/><rect x="19.87" y="20.00" width="9.98" height="4.05" fill="#404040"/><rect x="19.87" y="24.00" width="9.98" height="4.05" fill="#505050"/></svg>
<svg class="a" style="left:390.2px;top:132px;" width="29.8" height="28" viewBox="0 0 29.8 28"><rect x="0.00" y="0.00" width="9.98" height="4.05" fill="#ffffff"/><rect x="0.00" y="4.00" width="9.98" height="4.05" fill="#e0eeff"/><rect x="0.00" y="8.00" width="9.98" height="4.05" fill="#c8e0ff"/><rect x="0.00" y="12.00" width="9.98" height="4.05" fill="#a8ccff"/><rect x="0.00" y="16.00" width="9.98" height="4.05" fill="#80b4ff"/><rect x="0.00" y="20.00" width="9.98" height="4.05" fill="#60a0ff"/><rect x="0.00" y="24.00" width="9.98" height="4.05" fill="#4890ff"/><rect x="9.93" y="0.00" width="9.98" height="4.05" fill="#e8f2ff"/><rect x="9.93" y="4.00" width="9.98" height="4.05" fill="#c8deff"/><rect x="9.93" y="8.00" width="9.98" height="4.05" fill="#90beff"/><rect x="9.93" y="12.00" width="9.98" height="4.05" fill="#68a6ff"/><rect x="9.93" y="16.00" width="9.98" height="4.05" fill="#1878ff"/><rect x="9.93" y="20.00" width="9.98" height="4.05" fill="#0868ff"/><rect x="9.93" y="24.00" width="9.98" height="4.05" fill="#0868ff"/><rect x="19.87" y="0.00" width="9.98" height="4.05" fill="#ffffff"/><rect x="19.87" y="4.00" width="9.98" height="4.05" fill="#e8f2ff"/><rect x="19.87" y="8.00" width="9.98" height="4.05" fill="#d0e4ff"/><rect x="19.87" y="12.00" width="9.98" height="4.05" fill="#c0daff"/><rect x="19.87" y="16.00" width="9.98" height="4.05" fill="#2080ff"/><rect x="19.87" y="20.00" width="9.98" height="4.05" fill="#60a0ff"/><rect x="19.87" y="24.00" width="9.98" height="4.05" fill="#0868ff"/></svg>
<svg class="a" style="left:444.2px;top:132px;" width="29.8" height="28" viewBox="0 0 29.8 28"><rect x="0.00" y="0.00" width="9.98" height="4.05" fill="#ff3000"/><rect x="0.00" y="4.00" width="9.98" height="4.05" fill="#701000"/><rect x="0.00" y="8.00" width="9.98" height="4.05" fill="#006000"/><rect x="0.00" y="12.00" width="9.98" height="4.05" fill="#005800"/><rect x="0.00" y="16.00" width="9.98" height="4.05" fill="#000000"/><rect x="0.00" y="20.00" width="9.98" height="4.05" fill="#008800"/><rect x="0.00" y="24.00" width="9.98" height="4.05" fill="#005000"/><rect x="9.93" y="0.00" width="9.98" height="4.05" fill="#100800"/><rect x="9.93" y="4.00" width="9.98" height="4.05" fill="#00b000"/><rect x="9.93" y="8.00" width="9.98" height="4.05" fill="#00b800"/><rect x="9.93" y="12.00" width="9.98" height="4.05" fill="#00b000"/><rect x="9.93" y="16.00" width="9.98" height="4.05" fill="#ff3000"/><rect x="9.93" y="20.00" width="9.98" height="4.05" fill="#003000"/><rect x="9.93" y="24.00" width="9.98" height="4.05" fill="#000000"/><rect x="19.87" y="0.00" width="9.98" height="4.05" fill="#ff3000"/><rect x="19.87" y="4.00" width="9.98" height="4.05" fill="#100000"/><rect x="19.87" y="8.00" width="9.98" height="4.05" fill="#ff3000"/><rect x="19.87" y="12.00" width="9.98" height="4.05" fill="#a01800"/><rect x="19.87" y="16.00" width="9.98" height="4.05" fill="#005000"/><rect x="19.87" y="20.00" width="9.98" height="4.05" fill="#00a000"/><rect x="19.87" y="24.00" width="9.98" height="4.05" fill="#000000"/></svg>
<div class="a" style="left:263.5px;top:168.5px;width:373px;height:1px;background:#f8f8f8"></div>
<div class="a" style="left:263.5px;top:169.5px;width:373px;height:12.5px;background:#efefef"></div>
<svg class="a" style="left:270.8px;top:171.4px;" width="3.4" height="5.4" viewBox="0 0 3.4 5.4"><path d="M2.9 .4 L.6 2.7 L2.9 5" stroke="#c4c4c4" stroke-width=".9" fill="none"/></svg>
<svg class="a" style="left:626.6px;top:171.4px;" width="3.4" height="5.4" viewBox="0 0 3.4 5.4"><path d="M.5 .4 L2.8 2.7 L.5 5" stroke="#c4c4c4" stroke-width=".9" fill="none"/></svg>
<svg class="a" style="left:16.6px;top:103.5px;" width="10" height="9.4" viewBox="0 0 10 9.4"><rect x=".5" y=".5" width="9" height="8.4" fill="#fdfdff" stroke="#e0e0e8" stroke-width=".8"/><path d="M.9 .4 V8.5 H9.6" stroke="#b4b4c8" stroke-width="1" fill="none"/><path d="M1.8 6.8 L3.6 2.6 L5.4 5.8 L6.8 3.4 L8.6 5.6" stroke="#c79fe2" stroke-width=".8" fill="none"/></svg>
<svg class="a" style="left:16.6px;top:118.01px;" width="10" height="9.4" viewBox="0 0 10 9.4"><rect x=".5" y=".5" width="9" height="8.4" fill="#fdfdff" stroke="#e0e0e8" stroke-width=".8"/><path d="M.9 .4 V8.5 H9.6" stroke="#b4b4c8" stroke-width="1" fill="none"/><path d="M1.8 6.8 L3.6 2.6 L5.4 5.8 L6.8 3.4 L8.6 5.6" stroke="#c79fe2" stroke-width=".8" fill="none"/></svg>
<svg class="a" style="left:16.6px;top:132.52px;" width="10" height="9.4" viewBox="0 0 10 9.4"><rect x=".5" y=".5" width="9" height="8.4" fill="#fdfdff" stroke="#e0e0e8" stroke-width=".8"/><path d="M.9 .4 V8.5 H9.6" stroke="#b4b4c8" stroke-width="1" fill="none"/><path d="M1.8 6.8 L3.6 2.6 L5.4 5.8 L6.8 3.4 L8.6 5.6" stroke="#c79fe2" stroke-width=".8" fill="none"/></svg>
<svg class="a" style="left:16.6px;top:147.03px;" width="10" height="9.4" viewBox="0 0 10 9.4"><rect x=".5" y=".5" width="9" height="8.4" fill="#fdfdff" stroke="#e0e0e8" stroke-width=".8"/><path d="M.9 .4 V8.5 H9.6" stroke="#b4b4c8" stroke-width="1" fill="none"/><path d="M1.8 6.8 L3.6 2.6 L5.4 5.8 L6.8 3.4 L8.6 5.6" stroke="#c79fe2" stroke-width=".8" fill="none"/></svg>
<svg class="a" style="left:16.6px;top:161.54px;" width="10" height="9.4" viewBox="0 0 10 9.4"><rect x=".5" y=".5" width="9" height="8.4" fill="#fdfdff" stroke="#e0e0e8" stroke-width=".8"/><path d="M.9 .4 V8.5 H9.6" stroke="#b4b4c8" stroke-width="1" fill="none"/><path d="M1.8 6.8 L3.6 2.6 L5.4 5.8 L6.8 3.4 L8.6 5.6" stroke="#c79fe2" stroke-width=".8" fill="none"/></svg>
<svg class="a" style="left:16.6px;top:176.05px;" width="10" height="9.4" viewBox="0 0 10 9.4"><rect x=".5" y=".5" width="9" height="8.4" fill="#fdfdff" stroke="#e0e0e8" stroke-width=".8"/><path d="M.9 .4 V8.5 H9.6" stroke="#b4b4c8" stroke-width="1" fill="none"/><path d="M1.8 6.8 L3.6 2.6 L5.4 5.8 L6.8 3.4 L8.6 5.6" stroke="#c79fe2" stroke-width=".8" fill="none"/></svg>
<svg class="a" style="left:16.6px;top:190.56px;" width="10" height="9.4" viewBox="0 0 10 9.4"><rect x=".5" y=".5" width="9" height="8.4" fill="#fdfdff" stroke="#e0e0e8" stroke-width=".8"/><path d="M.9 .4 V8.5 H9.6" stroke="#b4b4c8" stroke-width="1" fill="none"/><path d="M1.8 6.8 L3.6 2.6 L5.4 5.8 L6.8 3.4 L8.6 5.6" stroke="#c79fe2" stroke-width=".8" fill="none"/></svg>
<svg class="a" style="left:16.6px;top:205.07px;" width="10" height="9.4" viewBox="0 0 10 9.4"><rect x=".5" y=".5" width="9" height="8.4" fill="#fdfdff" stroke="#e0e0e8" stroke-width=".8"/><path d="M.9 .4 V8.5 H9.6" stroke="#b4b4c8" stroke-width="1" fill="none"/><path d="M1.8 6.8 L3.6 2.6 L5.4 5.8 L6.8 3.4 L8.6 5.6" stroke="#c79fe2" stroke-width=".8" fill="none"/></svg>
<svg class="a" style="left:16.6px;top:219.57999999999998px;" width="10" height="9.4" viewBox="0 0 10 9.4"><rect x=".5" y=".5" width="9" height="8.4" fill="#fdfdff" stroke="#e0e0e8" stroke-width=".8"/><path d="M.9 .4 V8.5 H9.6" stroke="#b4b4c8" stroke-width="1" fill="none"/><path d="M1.8 6.8 L3.6 2.6 L5.4 5.8 L6.8 3.4 L8.6 5.6" stroke="#c79fe2" stroke-width=".8" fill="none"/></svg>
<svg class="a" style="left:16.6px;top:234.09px;" width="10" height="9.4" viewBox="0 0 10 9.4"><rect x=".5" y=".5" width="9" height="8.4" fill="#fdfdff" stroke="#e0e0e8" stroke-width=".8"/><path d="M.9 .4 V8.5 H9.6" stroke="#b4b4c8" stroke-width="1" fill="none"/><path d="M1.8 6.8 L3.6 2.6 L5.4 5.8 L6.8 3.4 L8.6 5.6" stroke="#c79fe2" stroke-width=".8" fill="none"/></svg>
<svg class="a" style="left:16.6px;top:248.6px;" width="10" height="9.4" viewBox="0 0 10 9.4"><rect x=".5" y=".5" width="9" height="8.4" fill="#fdfdff" stroke="#e0e0e8" stroke-width=".8"/><path d="M.9 .4 V8.5 H9.6" stroke="#b4b4c8" stroke-width="1" fill="none"/><path d="M1.8 6.8 L3.6 2.6 L5.4 5.8 L6.8 3.4 L8.6 5.6" stroke="#c79fe2" stroke-width=".8" fill="none"/></svg>
<svg class="a" style="left:16.6px;top:263.11px;" width="10" height="9.4" viewBox="0 0 10 9.4"><rect x=".5" y=".5" width="9" height="8.4" fill="#fdfdff" stroke="#e0e0e8" stroke-width=".8"/><path d="M.9 .4 V8.5 H9.6" stroke="#b4b4c8" stroke-width="1" fill="none"/><path d="M1.8 6.8 L3.6 2.6 L5.4 5.8 L6.8 3.4 L8.6 5.6" stroke="#c79fe2" stroke-width=".8" fill="none"/></svg>
<svg class="a" style="left:16.4px;top:277.9px;" width="9" height="9" viewBox="0 0 9 9"><circle cx="4.5" cy="4.5" r="3.9" fill="#fff" stroke="#bdbdbd" stroke-width=".8"/><path d="M4.5 2.4 V6.6 M2.4 4.5 H6.6" stroke="#bdbdbd" stroke-width=".8"/></svg>
<svg class="a" style="left:16.4px;top:306.9px;" width="9" height="9" viewBox="0 0 9 9"><circle cx="4.5" cy="4.5" r="3.9" fill="#fff" stroke="#bdbdbd" stroke-width=".8"/><path d="M4.5 2.4 V6.6 M2.4 4.5 H6.6" stroke="#bdbdbd" stroke-width=".8"/></svg>
<div class="a" style="left:2px;top:290px;width:142px;height:1px;background:#e2e2e2"></div>
<svg class="a" style="left:5.8px;top:294.6px;" width="5.6" height="4" viewBox="0 0 5.6 4"><path d="M.4 .6 L2.8 3.2 L5.2 .6" stroke="#555" stroke-width="1" fill="none"/></svg>
<svg class="a" style="left:146.2px;top:105.5px;" width="5.4" height="3.8" viewBox="0 0 5.4 3.8"><path d="M.4 3.2 L2.7 .8 L5 3.2" stroke="#555" stroke-width="1.2" fill="none"/></svg>
<svg class="a" style="left:146px;top:324.3px;" width="5" height="3.4" viewBox="0 0 5 3.4"><path d="M.4 .5 L2.5 2.7 L4.6 .5" stroke="#555" stroke-width="1" fill="none"/></svg>
<svg class="a" style="left:142.9px;top:88.7px;" width="5" height="3.4" viewBox="0 0 5 3.4"><path d="M.4 .5 L2.5 2.7 L4.6 .5" stroke="#777" stroke-width=".9" fill="none"/></svg>
<svg class="a" style="left:16.5px;top:353.3px;" width="9.6" height="9.2" viewBox="0 0 9.6 9.2"><rect x=".4" y=".4" width="8.8" height="8.4" fill="#fff" stroke="#b9bec6" stroke-width=".8"/><rect x=".8" y=".8" width="8" height="2.2" fill="#a9c7e8"/><path d="M.6 3.2 H9 M.6 5.2 H9 M.6 7 H9 M3.4 .6 V8.8 M6.2 .6 V8.8" stroke="#c3c7ce" stroke-width=".6"/></svg>
<svg class="a" style="left:16.5px;top:367.5px;" width="10" height="9.4" viewBox="0 0 10 9.4"><rect x=".5" y=".5" width="9" height="8.4" fill="#fdfdff" stroke="#e0e0e8" stroke-width=".8"/><path d="M.9 .4 V8.5 H9.6" stroke="#b4b4c8" stroke-width="1" fill="none"/><path d="M1.8 6.8 L3.6 2.6 L5.4 5.8 L6.8 3.4 L8.6 5.6" stroke="#c79fe2" stroke-width=".8" fill="none"/></svg>
<svg class="a" style="left:804.8px;top:83.8px;" width="5.2" height="3.6" viewBox="0 0 5.2 3.6"><path d="M.4 3.1 L2.6 .8 L4.8 3.1" stroke="#555" stroke-width="1.1" fill="none"/></svg>
<svg class="a" style="left:804.8px;top:455px;" width="5.2" height="3.6" viewBox="0 0 5.2 3.6"><path d="M.4 .5 L2.6 2.8 L4.8 .5" stroke="#555" stroke-width="1.1" fill="none"/></svg>
<svg class="a" style="left:6px;top:470.5px;" width="10.4" height="9.6" viewBox="0 0 10.4 9.6"><rect x=".5" y=".5" width="9.4" height="8.6" fill="#f7f7f7" stroke="#b5b5b5" stroke-width=".9"/><path d="M3 3 V7 M7.6 5 H4 M5.4 3.6 L4 5 L5.4 6.4" stroke="#888" stroke-width=".8" fill="none"/></svg>
<svg class="a" style="left:109px;top:470.3px;" width="8.6" height="9.6" viewBox="0 0 8.6 9.6"><path d="M8.4 .3 V9.3 L.4 4.8 Z" fill="#3f9b45"/></svg>
<svg class="a" style="left:126.6px;top:470.3px;" width="8.6" height="9.6" viewBox="0 0 8.6 9.6"><path d="M.2 .3 V9.3 L8.2 4.8 Z" fill="#3f9b45"/></svg>
<svg class="a" style="left:141px;top:469.5px;" width="11" height="10" viewBox="0 0 11 10"><circle cx="4.2" cy="4.2" r="3.9" fill="#3f8f4a"/><path d="M6.6 6.4 L10 9.4" stroke="#f0a030" stroke-width="1.9" stroke-linecap="round"/><rect x="6" y=".4" width="3.6" height="2.6" fill="#f4f4f4" stroke="#cfcfcf" stroke-width=".4"/></svg>
<div class="a" style="left:156px;top:467px;width:1px;height:16px;background:#d4d4d4"></div>
<svg class="a" style="left:162px;top:470px;" width="9.8" height="9.8" viewBox="0 0 9.8 9.8"><rect x="0" y="0" width="9.8" height="9.8" fill="#c7c7c7"/><path d="M4.9 1 V8.8 M1 4.9 H8.8" stroke="#dcdcdc" stroke-width="1"/><rect x="1.6" y="1.6" width="2.4" height="2.4" fill="#b9b9b9"/><rect x="5.8" y="1.6" width="2.4" height="2.4" fill="#b9b9b9"/><rect x="1.6" y="5.8" width="2.4" height="2.4" fill="#b9b9b9"/><rect x="5.8" y="5.8" width="2.4" height="2.4" fill="#b9b9b9"/></svg>
<div class="a" style="left:178px;top:465.5px;width:104px;height:18px;background:#f1f1f1;border:1px solid #d9d9d9;border-radius:3px"></div>
<div class="a" style="left:199px;top:466px;width:1px;height:17px;background:#dcdcdc"></div>
<div class="a" style="left:219.5px;top:466px;width:1px;height:17px;background:#dcdcdc"></div>
<div class="a" style="left:240px;top:466px;width:1px;height:17px;background:#dcdcdc"></div>
<div class="a" style="left:260px;top:466px;width:1px;height:17px;background:#dcdcdc"></div>
<div class="a" style="left:240.5px;top:465.5px;width:19.5px;height:18px;background:#fbfbfb;border:1px solid #dadada"></div>
<svg class="a" style="left:183.3px;top:469.2px;" width="10" height="10" viewBox="0 0 10 10"><rect x=".4" y=".4" width="9.2" height="9.2" fill="#fff" stroke="#b5bbc6" stroke-width=".8"/><rect x=".8" y=".8" width="8.4" height="2.2" fill="#a9c7e8"/><path d="M.6 3.2 H9.4 M.6 5.4 H9.4 M.6 7.4 H9.4 M3.5 .6 V9.4 M6.5 .6 V9.4" stroke="#c0c5cd" stroke-width=".6"/></svg>
<svg class="a" style="left:203.8px;top:468.6px;" width="10.4" height="10.4" viewBox="0 0 10.4 10.4"><circle cx="5.2" cy="5.2" r="4.6" fill="#fdfdfd" stroke="#8d949e" stroke-width=".9"/><rect x="4.6" y="4.4" width="1.3" height="3.4" fill="#3b6fb5"/><rect x="4.6" y="2.4" width="1.3" height="1.3" fill="#3b6fb5"/></svg>
<svg class="a" style="left:224.8px;top:469.4px;" width="10" height="9.6" viewBox="0 0 10 9.6"><rect x=".5" y=".5" width="9" height="8.6" rx="1.6" fill="#fdfdfd" stroke="#9a9a9a" stroke-width=".9"/><path d="M3 3.8 H7 M3 5.8 H7" stroke="#666" stroke-width=".9"/></svg>
<svg class="a" style="left:245px;top:469.6px;" width="10" height="8.8" viewBox="0 0 10 8.8"><rect x=".4" y=".4" width="9.2" height="8" fill="#fdfcff" stroke="#dcd6e6" stroke-width=".8"/><path d="M1.6 6.6 L3.4 2.4 L5.2 5.6 L6.6 3.4 L8.6 5.8" stroke="#d7a4d6" stroke-width=".8" fill="none"/></svg>
<svg class="a" style="left:266.5px;top:469.6px;" width="9" height="9" viewBox="0 0 9 9"><rect x=".3" y=".3" width="8.4" height="8.4" fill="#e4e6ea"/><rect x="1.4" y="5" width="1.4" height="3" fill="#9cb0c8"/><rect x="3.4" y="4" width="1.4" height="4" fill="#b7a98c"/><rect x="5.4" y="3" width="1.4" height="5" fill="#9cb0c8"/><rect x="5.6" y=".8" width="2.4" height="2" fill="#6f94c4"/></svg>
<div class="a" style="left:283.5px;top:467px;width:114px;height:15.5px;background:#fff;border:1px solid #9d9d9d"></div>
<div class="t" style="left:286.2px;top:471.1px;font-size:8px;font-weight:400;color:#333;letter-spacing:-0.406px;">Exercise tolerance</div>
<svg class="a" style="left:388px;top:473px;" width="7" height="5" viewBox="0 0 7 5"><path d="M.5 .8 L3.5 3.8 L6.5 .8" stroke="#555" stroke-width="1" fill="none"/></svg>
<svg class="a" style="left:403.5px;top:469.8px;" width="11" height="10.4" viewBox="0 0 11 10.4"><ellipse cx="7.6" cy="3" rx="2.7" ry="2" transform="rotate(-40 7.6 3)" fill="none" stroke="#58616d" stroke-width="1.1"/><ellipse cx="3.4" cy="7.2" rx="2.7" ry="2" transform="rotate(-40 3.4 7.2)" fill="none" stroke="#58616d" stroke-width="1.1"/><path d="M4.6 6 L6.4 4.2" stroke="#58616d" stroke-width="1.1"/></svg>
<svg class="a" style="left:415.6px;top:474.6px;" width="3.4" height="2.4" viewBox="0 0 3.4 2.4"><path d="M0 0 L3.4 0 L1.7 2.3 Z" fill="#222"/></svg>
<div class="a" style="left:424px;top:467px;width:1px;height:16px;background:#d4d4d4"></div>
<div class="a" style="left:778.5px;top:467px;width:1px;height:16px;background:#d4d4d4"></div>
<svg class="a" style="left:781.5px;top:468.6px;" width="11" height="11" viewBox="0 0 11 11"><circle cx="4.2" cy="4.2" r="3.4" fill="#f4f7fa" stroke="#3c5570" stroke-width="1.2"/><path d="M6.8 6.8 L10 10" stroke="#3c5570" stroke-width="1.6" stroke-linecap="round"/><path d="M2.6 4.2 H5.8" stroke="#3c5570" stroke-width=".9"/></svg>
<div class="a" style="left:802px;top:472.8px;width:51px;height:1px;background:#d9d9d9"></div>
<svg class="a" style="left:810px;top:468px;" width="7.8" height="12.2" viewBox="0 0 7.8 12.2"><path d="M0 0 H7.8 V8 L3.9 12 L0 8 Z" fill="#1b73e4"/></svg>
<svg class="a" style="left:853.8px;top:469.6px;" width="11" height="11" viewBox="0 0 11 11"><circle cx="4.2" cy="4.2" r="3.4" fill="#f4f7fa" stroke="#3c5570" stroke-width="1.2"/><path d="M6.8 6.8 L10 10" stroke="#3c5570" stroke-width="1.6" stroke-linecap="round"/><path d="M2.6 4.2 H5.8" stroke="#3c5570" stroke-width=".9"/><path d="M4.2 2.6 V5.8" stroke="#3c5570" stroke-width=".9"/></svg>
<div class="t" style="left:871.0px;top:471.5px;font-size:7.5px;font-weight:400;color:#777;letter-spacing:-0.397px;">100%</div>
<div class="a" style="left:846px;top:456px;width:43px;height:21px;background:rgba(105,105,105,.72);box-shadow:0 0 2px rgba(90,90,90,.6)"></div>
<div class="a" style="left:851.5px;top:460px;width:3px;height:11px;background:#9a9a9a"></div>
<div class="a" style="left:857.5px;top:460px;width:3px;height:11px;background:#9a9a9a"></div>
<svg class="a" style="left:872.5px;top:460px;" width="11" height="11" viewBox="0 0 11 11"><rect x=".5" y=".5" width="10" height="10" fill="none" stroke="#9c9c9c" stroke-width="1"/><circle cx="5.5" cy="4.4" r="1.7" fill="#9c9c9c"/><path d="M2 10 Q5.5 4.6 9 10 Z" fill="#9c9c9c"/></svg>
<svg class="a" style="left:8px;top:490.8px;" width="10.8" height="10.4" viewBox="0 0 12 11.2"><path d="M0 1.6 L5.2 .9 V5.3 H0 Z M5.9 .8 L12 0 V5.3 H5.9 Z M0 5.9 H5.2 V10.3 L0 9.6 Z M5.9 5.9 H12 V11.2 L5.9 10.4 Z" fill="#f2f2f2"/></svg>
<svg class="a" style="left:31px;top:490.5px;" width="11.4" height="11.4" viewBox="0 0 11.4 11.4"><circle cx="5.7" cy="5.7" r="4.7" fill="none" stroke="#f4f4f4" stroke-width="1.5"/></svg>
<svg class="a" style="left:54px;top:491px;" width="14.4" height="10.4" viewBox="0 0 14.4 10.4"><rect x="3" y=".6" width="8.4" height="9.2" fill="none" stroke="#e8e8e8" stroke-width="1"/><path d="M1.8 2 H.5 V8.4 H1.8 M12.6 2 H13.9 V8.4 H12.6" fill="none" stroke="#e8e8e8" stroke-width="1"/></svg>
<svg class="a" style="left:80.8px;top:491.4px;" width="11" height="9.6" viewBox="0 0 12 10.8"><path d="M0 1 H4.6 L5.6 2.2 H12 V10.6 H0 Z" fill="#f5c84c"/><rect x="0" y="3.4" width="12" height="7.2" fill="#fbdc6e"/><rect x="3" y="6.4" width="6" height="4.2" fill="#3f8fe0"/><rect x="4.4" y="7.8" width="3.2" height="2.8" fill="#dfeefc"/></svg>
<div class="a" style="left:80px;top:505px;width:16px;height:1px;background:#7fb6ea"></div>
<svg class="a" style="left:104.8px;top:490.4px;" width="10.6" height="11.4" viewBox="0 0 10.6 11.4"><path d="M3 3 V1.6 Q3 .5 5.3 .5 Q7.6 .5 7.6 1.6 V3" fill="none" stroke="#e8e8e8" stroke-width=".9"/><rect x=".3" y="2.8" width="10" height="8.2" fill="#f2f2f2"/><rect x="2.6" y="4.6" width="2.3" height="2.3" fill="#f25022"/><rect x="5.5" y="4.6" width="2.3" height="2.3" fill="#7fba00"/><rect x="2.6" y="7.5" width="2.3" height="2.3" fill="#00a4ef"/><rect x="5.5" y="7.5" width="2.3" height="2.3" fill="#ffb900"/></svg>
<svg class="a" style="left:129.8px;top:490.6px;" width="10.4" height="10.4" viewBox="0 0 11.4 11.4"><circle cx="5.7" cy="5.7" r="5.5" fill="#e33b2e"/><path d="M5.7 5.7 L.96 8.45 A5.5 5.5 0 0 0 5.7 11.2 A5.5 5.5 0 0 0 8.45 10.46 Z" fill="#2da94f"/><path d="M5.7 5.7 L.96 8.45 A5.5 5.5 0 0 1 .5 3.9 Z" fill="#2da94f"/><path d="M5.7 5.7 L8.45 10.46 A5.5 5.5 0 0 0 10.9 3.9 L5.7 3.9 Z" fill="#fdd231"/><circle cx="5.7" cy="5.7" r="2.5" fill="#f1f1f1"/><circle cx="5.7" cy="5.7" r="1.9" fill="#3f86ee"/></svg>
<svg class="a" style="left:154.6px;top:490.8px;" width="10.6" height="10.6" viewBox="0 0 10.6 10.6"><rect width="10.6" height="10.6" fill="#7aa829"/><rect x="2" y="5.6" width="1.4" height="3.6" fill="#dfeec0"/><rect x="4" y="2.4" width="1.4" height="6.8" fill="#dfeec0"/><rect x="6" y="4.2" width="1.4" height="5" fill="#dfeec0"/><rect x="8" y="6.4" width="1.2" height="2.8" fill="#dfeec0"/></svg>
<div class="a" style="left:178px;top:490.6px;width:10.8px;height:11px;background:#ee5a24;border-radius:1px"></div>
<div class="t" style="left:180.2px;top:491.5px;font-size:10px;font-weight:700;color:#fff;letter-spacing:-0.072px;">S</div>
<div class="a" style="left:174px;top:505px;width:19px;height:1px;background:#7fb6ea"></div>
<div class="a" style="left:202px;top:490.6px;width:10.6px;height:11px;background:#2563a8;border-radius:1px"></div>
<div class="t" style="left:204.2px;top:491.5px;font-size:10px;font-weight:700;color:#fff;letter-spacing:-0.272px;">S</div>
<div class="a" style="left:220px;top:486px;width:23.5px;height:20px;background:#3a3d42"></div>
<div class="a" style="left:220px;top:504.5px;width:23.5px;height:1.5px;background:#8cc2f2"></div>
<svg class="a" style="left:226.6px;top:492.2px;" width="11.6" height="7.2" viewBox="0 0 21 12.5"><defs><linearGradient id="pbc" x1="0" y1="0" x2="0" y2="1"><stop offset="0" stop-color="#52ccf6"/><stop offset="1" stop-color="#1e8df6"/></linearGradient><linearGradient id="prc" gradientUnits="userSpaceOnUse" x1="13" y1="12.5" x2="19" y2="3"><stop offset="0" stop-color="#ff4f8f"/><stop offset=".22" stop-color="#ff6a4a"/><stop offset=".45" stop-color="#ff9a28"/><stop offset=".72" stop-color="#ffd83a"/><stop offset="1" stop-color="#9fe06a"/></linearGradient></defs><path d="M0 12.5 L6.6 0 L10.4 0 L14.4 12.5 Z" fill="url(#pbc)"/><path d="M10.2 0 L14 0 L21 12.5 L14.2 12.5 Z" fill="url(#prc)"/></svg>
<svg class="a" style="left:250.8px;top:491.4px;" width="10.6" height="11" viewBox="0 0 10.6 11"><path d="M.6 6.2 Q.6 .6 5.6 .6 Q10.2 .6 10.2 5.2 V6.4 H3.4 Q3.6 8.8 6.4 8.8 Q8.2 8.8 9.8 7.9 V9.9 Q8.2 10.7 6 10.7 Q.6 10.7 .6 6.2 Z M3.4 4.6 H7.4 Q7.3 2.6 5.5 2.6 Q3.8 2.6 3.4 4.6 Z" fill="#1e8fea" fill-rule="evenodd"/></svg>
<svg class="a" style="left:740.6px;top:494px;" width="6.6" height="4.2" viewBox="0 0 6.6 4.2"><path d="M.5 3.7 L3.3 .8 L6.1 3.7" stroke="#e8e8e8" stroke-width="1" fill="none"/></svg>
<svg class="a" style="left:755.8px;top:491.8px;" width="11" height="8" viewBox="0 0 11 8"><rect x="3" y="2.4" width="6.6" height="4.6" fill="none" stroke="#e4e4e4" stroke-width=".9"/><rect x="9.8" y="3.8" width="1" height="1.8" fill="#e4e4e4"/><circle cx="1.8" cy="2" r="1.5" fill="none" stroke="#e4e4e4" stroke-width=".8"/><path d="M1.8 3.4 V7.4" stroke="#e4e4e4" stroke-width=".8"/><path d="M5 3.6 L7.6 5.8 M7.6 3.6 L5 5.8" stroke="#e4e4e4" stroke-width=".6"/></svg>
<svg class="a" style="left:771.6px;top:490.6px;" width="10" height="10.4" viewBox="0 0 10 10.4"><path d="M9.4 2.2 A8 8 0 0 0 1.6 10" fill="none" stroke="#8c8c8c" stroke-width="1"/><path d="M9.4 4.8 A5.4 5.4 0 0 0 4.2 10" fill="none" stroke="#8c8c8c" stroke-width="1"/><path d="M9.4 7.4 A2.8 2.8 0 0 0 6.8 10" fill="none" stroke="#8c8c8c" stroke-width="1"/><path d="M1.4 .2 V2.6 M.2 1.4 H2.6 M.5 .5 L2.3 2.3 M2.3 .5 L.5 2.3" stroke="#f0f0f0" stroke-width=".6"/></svg>
<svg class="a" style="left:786.6px;top:491.4px;" width="11.4" height="9" viewBox="0 0 11.4 9"><path d="M.5 3 H2.4 L4.8 .8 V8.2 L2.4 6 H.5 Z" fill="none" stroke="#e8e8e8" stroke-width=".9"/><path d="M6.4 2.8 Q7.6 4.5 6.4 6.2 M8 1.6 Q10 4.5 8 7.4 M9.6 .6 Q12.2 4.5 9.6 8.4" fill="none" stroke="#e8e8e8" stroke-width=".8"/></svg>
<div class="t" style="left:803.7px;top:492.2px;font-size:7.5px;font-weight:400;color:#f0f0f0;letter-spacing:-0.422px;">ENG</div>
<div class="t" style="left:829.0px;top:492.2px;font-size:7.5px;font-weight:400;color:#f0f0f0;letter-spacing:0.153px;">8:29 AM</div>
<svg class="a" style="left:871px;top:490.8px;" width="11.6" height="10.8" viewBox="0 0 11.6 10.8"><path d="M.4 .4 H11.2 V8 H7.4 L5.8 10.2 L4.2 8 H.4 Z" fill="#f4f4f4"/><path d="M2.4 2.8 H9.2 M2.4 4.6 H9.2" stroke="#9aa0a8" stroke-width=".7"/></svg>
<div class="a" style="left:-8px;top:-8px;width:10px;height:522px;background:linear-gradient(90deg,#161616 80%,#4a4a4a)"></div>
<div class="a" style="left:897.6px;top:-8px;width:11px;height:522px;background:#0c0c0c"></div>
</div>
</body></html>
